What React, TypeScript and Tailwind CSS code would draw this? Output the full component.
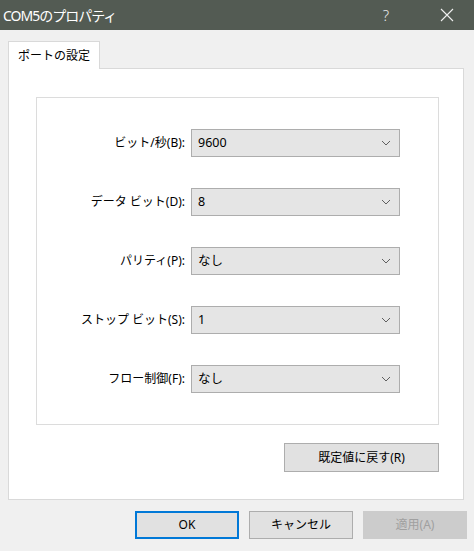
import React from "react";

const fields: { label: string; value: string }[] = [
	{ label: "ビット/秒(B):", value: "9600" },
	{ label: "データ ビット(D):", value: "8" },
	{ label: "パリティ(P):", value: "なし" },
	{ label: "ストップ ビット(S):", value: "1" },
	{ label: "フロー制御(F):", value: "なし" },
];

const Chevron = () => (
	<svg width="10" height="6" viewBox="0 0 10 6" className="text-[#606060]">
		<polyline points="1,1 5,5 9,1" fill="none" stroke="currentColor" strokeWidth="1" />
	</svg>
);

const Select: React.FC<{ value: string }> = ({ value }) => (
	<div className="flex h-[28px] w-[209px] items-center justify-between border border-[#adadad] bg-[#e5e5e5] pl-[6px] pr-[8px] text-[12.5px]">
		<span>{value}</span>
		<Chevron />
	</div>
);

const DialogButton: React.FC<{ label: string; kind?: "default" | "normal" | "disabled" }> = ({
	label,
	kind = "normal",
}) => {
	const cls =
		kind === "default"
			? "border-2 border-[#0078d7] bg-[#e1e1e1] text-black"
			: kind === "disabled"
				? "border border-[#cccccc] bg-[#cccccc] text-[#a0a0a0]"
				: "border border-[#adadad] bg-[#e1e1e1] text-black";
	return (
		<div className={`flex h-[28px] w-[104px] items-center justify-center ${cls}`}>
			{label}
		</div>
	);
};

export default function App() {
	return (
		<div
			className="flex h-[551px] w-[474px] flex-col bg-[#f0f0f0] text-[12px] text-black"
			style={{ fontFamily: '"Noto Sans", "Noto Sans CJK JP", sans-serif' }}
		>
			{/* title bar */}
			<div className="flex h-[30px] items-center bg-[#535b53] pl-[3px] text-white">
				<span className="text-[14px] tracking-[-1px]">COM5のプロパティ</span>
				<span className="ml-auto mr-[51px] text-[15px] font-light text-[#e8e8e8]">?</span>
				<svg width="14" height="14" viewBox="0 0 14 14" className="mr-[20px]">
					<path d="M1 1 L13 13 M13 1 L1 13" stroke="#f0f0f0" strokeWidth="1.1" />
				</svg>
			</div>

			{/* tabs */}
			<div className="flex pl-[8px] pt-[11px]">
				<div className="relative z-10 -mb-px flex h-[28px] w-[92px] items-center justify-center border border-b-0 border-[#d9d9d9] bg-white">
					ポートの設定
				</div>
			</div>

			{/* tab page */}
			<div className="ml-[8px] flex h-[432px] w-[456px] flex-col border border-[#d9d9d9] bg-white pl-[27px] pt-[28px]">
				<div className="flex h-[328px] w-[403px] flex-col gap-[31px] border border-[#dcdcdc] pt-[31px]">
					{fields.map((f) => (
						<div key={f.label} className="flex items-center">
							<span className="w-[154px] pr-[6px] text-right">{f.label}</span>
							<Select value={f.value} />
						</div>
					))}
				</div>
				<div className="mt-[18px] flex w-[403px] justify-end">
					<div className="flex h-[29px] w-[155px] items-center justify-center border border-[#adadad] bg-[#e1e1e1]">
						既定値に戻す(R)
					</div>
				</div>
			</div>

			{/* dialog buttons */}
			<div className="mt-[11px] flex justify-end gap-[10px] pr-[7px]">
				<DialogButton label="OK" kind="default" />
				<DialogButton label="キャンセル" />
				<DialogButton label="適用(A)" kind="disabled" />
			</div>
		</div>
	);
}
